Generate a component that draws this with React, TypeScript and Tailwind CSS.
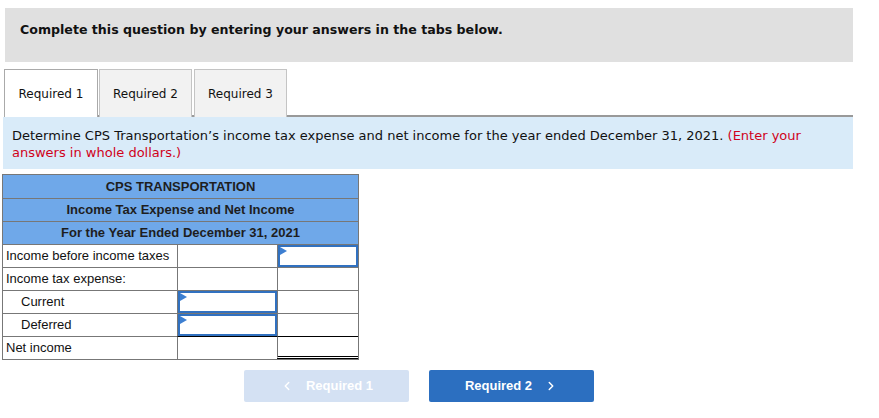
import React from 'react'
import { ChevronLeft, ChevronRight } from 'lucide-react'

const verdana = { fontFamily: '"DejaVu Sans", Verdana, sans-serif' }
const arial = { fontFamily: '"Liberation Sans", Arial, sans-serif' }

function Flag() {
  return (
    <svg className="absolute left-0 top-0" width="7" height="8" viewBox="0 0 7 8">
      <path d="M0 0 L7 4 L0 8 Z" fill="#3d7fd1" />
    </svg>
  )
}

function InputCell() {
  return (
    <div className="relative h-full border-2 border-[#3171c0]">
      <Flag />
    </div>
  )
}

const rows = [
  { label: 'Income before income taxes', indent: false, mid: false, right: true },
  { label: 'Income tax expense:', indent: false, mid: false, right: false },
  { label: 'Current', indent: true, mid: true, right: false },
  { label: 'Deferred', indent: true, mid: true, right: false },
]

function App() {
  return (
    <div className="w-[879px] h-[418px] bg-white pt-2 text-[#111]" style={verdana}>
      <div className="ml-[5px] w-[848px] h-[54px] bg-[#e0e0e0] pl-[15px] pt-[13px]">
        <p className="text-[12.6px] font-bold leading-[18px]">Complete this question by entering your answers in the tabs below.</p>
      </div>

      <div className="mt-[7px] ml-[4px] w-[849px] flex items-end h-[48px] border-b-2 border-[#999]">
        <div className="w-[94px] h-[48px] -mb-[2px] bg-white border border-b-0 border-[#aaa] flex items-center justify-center text-[12px]">
          Required 1
        </div>
        <div className="ml-[1px] w-[93px] h-[48px] -mb-[2px] bg-[#f2f2f2] border border-b-0 border-[#c4c4c4] flex items-center justify-center text-[12px]">
          Required 2
        </div>
        <div className="ml-[2px] w-[93px] h-[48px] -mb-[2px] bg-[#f2f2f2] border border-b-0 border-[#c4c4c4] flex items-center justify-center text-[12px]">
          Required 3
        </div>
      </div>

      <div className="ml-[3px] w-[850px] h-[52px] bg-[#d9ebf9] pl-[9px] pr-[12px] pt-[10px] text-[13px] leading-[17px]">
        Determine CPS Transportation’s income tax expense and net income for the year ended December 31, 2021.{' '}
        <span className="text-[#d0021b]">(Enter your answers in whole dollars.)</span>
      </div>

      <div className="mt-[5px] ml-[2px] w-[357px] border border-[#777] text-[13px]" style={arial}>
        {['CPS TRANSPORTATION', 'Income Tax Expense and Net Income', 'For the Year Ended December 31, 2021'].map((t, i) => (
          <div
            key={t}
            className={`h-[23px] bg-[#6fa8e9] flex items-center justify-center font-bold text-[#1e1e1e] ${i > 0 ? 'border-t border-[#777]' : ''}`}
          >
            {t}
          </div>
        ))}
        {rows.map((r) => (
          <div key={r.label} className="grid grid-cols-[174px_100px_1fr] h-[23px] border-t border-[#777]">
            <div className={`flex items-center ${r.indent ? 'pl-[18px]' : 'pl-[3px]'}`}>{r.label}</div>
            <div className="border-l border-[#777]">{r.mid && <InputCell />}</div>
            <div className="border-l border-[#777]">{r.right && <InputCell />}</div>
          </div>
        ))}
        <div className="grid grid-cols-[174px_100px_1fr] h-[23px] border-t border-[#777]">
          <div className="flex items-center pl-[3px]">Net income</div>
          <div className="border-l border-[#777] border-t border-t-black -mt-px" />
          <div className="border-l border-[#777] border-t border-t-black -mt-px border-b-[3px] border-b-black border-double" />
        </div>
      </div>

      <div className="mt-[10px] flex gap-[20px] pl-[244px]" style={arial}>
        <div className="w-[165px] h-[32px] rounded-[2px] bg-[#d4e1f3] flex items-center justify-center gap-[12px] text-white font-bold text-[13px]">
          <ChevronLeft size={14} strokeWidth={2.5} />
          <span>Required 1</span>
        </div>
        <div className="w-[165px] h-[32px] rounded-[2px] bg-[#2c6fc0] flex items-center justify-center gap-[12px] text-white font-bold text-[13px]">
          <span>Required 2</span>
          <ChevronRight size={14} strokeWidth={2.5} />
        </div>
      </div>
    </div>
  )
}

export default App
